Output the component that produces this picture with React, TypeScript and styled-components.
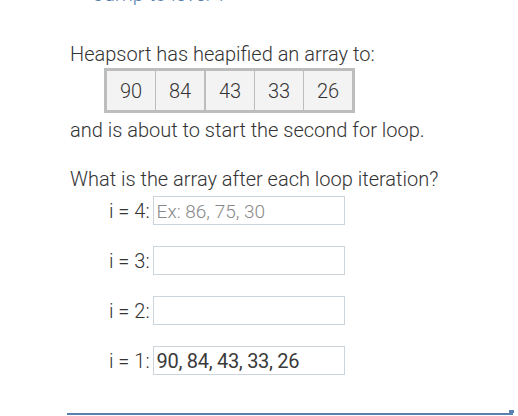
import React from "react";
import styled, { createGlobalStyle } from "styled-components";

const GlobalStyle = createGlobalStyle`
  html, body {
    margin: 0;
    padding: 0;
    background: #fff;
    overflow: hidden;
  }
  body {
    font-family: Roboto, "Noto Sans", sans-serif;
    font-weight: 300;
    color: #333;
  }
`;

const Page = styled.div`
  width: 518px;
  height: 416px;
  position: relative;
  overflow: hidden;
  padding-left: 70px;
  box-sizing: border-box;
`;

const JumpLink = styled.div`
  margin: -16px 0 0 23px;
  height: 20px;
  font-size: 20px;
  line-height: 20px;
  color: #5a7fae;
`;

const Paragraph = styled.p<{ $top: number }>`
  margin: ${(p) => p.$top}px 0 0;
  font-size: 20px;
  line-height: 24px;
`;

const ArrayBox = styled.div`
  display: flex;
  width: max-content;
  margin: 2px 0 0 34px;
  border: 3px solid #bdbdbd;
  background: #bdbdbd;
  gap: 1px;
`;

const Cell = styled.div<{ $thick?: boolean }>`
  width: 48px;
  height: 39px;
  display: flex;
  align-items: center;
  justify-content: center;
  background: #f3f3f3;
  font-size: 20px;
  margin-left: ${(p) => (p.$thick ? "1px" : "0")};
`;

const Rows = styled.div`
  display: flex;
  flex-direction: column;
  gap: 21px;
  margin: 5px 0 0 39px;
`;

const Row = styled.div`
  display: flex;
  align-items: center;
  gap: 3px;
`;

const Label = styled.span`
  font-size: 20px;
  white-space: nowrap;
`;

const Field = styled.input`
  width: 192px;
  height: 29px;
  box-sizing: border-box;
  border: 1px solid #cdd5dc;
  padding: 0 3px;
  font-family: Roboto, "Noto Sans", sans-serif;
  font-weight: 400;
  font-size: 20px;
  letter-spacing: -0.3px;
  color: #3a3a3a;
  outline: none;
  &::placeholder {
    font-weight: 300;
    font-size: 19px;
    letter-spacing: 0;
    color: #888;
  }
`;

const Rule = styled.div`
  position: absolute;
  left: 67px;
  right: 5px;
  bottom: 1px;
  height: 2px;
  background: #5b7fae;
  &::after {
    content: "";
    position: absolute;
    right: -1px;
    top: -3px;
    width: 5px;
    height: 3px;
    background: #5b7fae;
  }
`;

const values = [90, 84, 43, 33, 26];
const rows: { i: number; value?: string; placeholder?: string }[] = [
  { i: 4, placeholder: "Ex: 86, 75, 30" },
  { i: 3 },
  { i: 2 },
  { i: 1, value: "90, 84, 43, 33, 26" },
];

export default function App() {
  return (
    <>
      <GlobalStyle />
      <Page>
        <JumpLink>Jump to level 1</JumpLink>
        <Paragraph $top={38}>Heapsort has heapified an array to:</Paragraph>
        <ArrayBox>
          {values.map((v, idx) => (
            <Cell key={v} $thick={idx === 2}>
              {v}
            </Cell>
          ))}
        </ArrayBox>
        <Paragraph $top={5}>and is about to start the second for loop.</Paragraph>
        <Paragraph $top={25}>What is the array after each loop iteration?</Paragraph>
        <Rows>
          {rows.map((r) => (
            <Row key={r.i}>
              <Label>i = {r.i}:</Label>
              <Field
                defaultValue={r.value}
                placeholder={r.placeholder}
                readOnly
              />
            </Row>
          ))}
        </Rows>
        <Rule />
      </Page>
    </>
  );
}
